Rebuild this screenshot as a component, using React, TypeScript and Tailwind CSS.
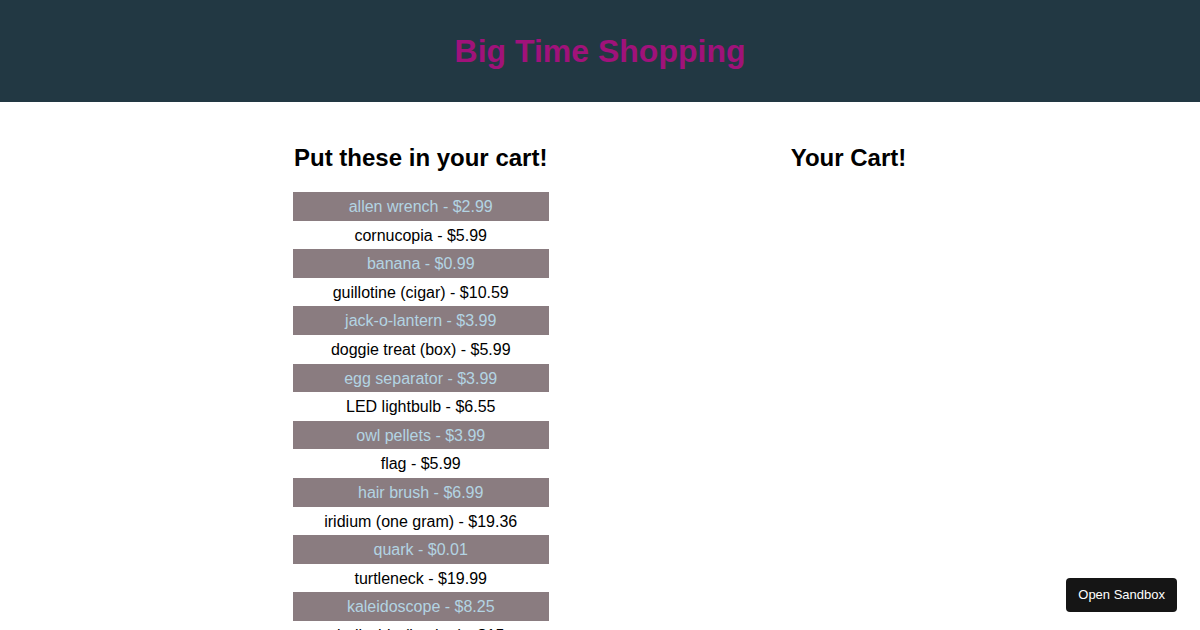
import React from 'react';

const items = [
  { name: 'allen wrench', price: '$2.99' },
  { name: 'cornucopia', price: '$5.99' },
  { name: 'banana', price: '$0.99' },
  { name: 'guillotine (cigar)', price: '$10.59' },
  { name: 'jack-o-lantern', price: '$3.99' },
  { name: 'doggie treat (box)', price: '$5.99' },
  { name: 'egg separator', price: '$3.99' },
  { name: 'LED lightbulb', price: '$6.55' },
  { name: 'owl pellets', price: '$3.99' },
  { name: 'flag', price: '$5.99' },
  { name: 'hair brush', price: '$6.99' },
  { name: 'iridium (one gram)', price: '$19.36' },
  { name: 'quark', price: '$0.01' },
  { name: 'turtleneck', price: '$19.99' },
  { name: 'kaleidoscope', price: '$8.25' },
  { name: 'bull whip (leather)', price: '$15' },
];

export default function App() {
  return (
    <div className="bg-white text-black font-['Liberation_Sans',Arial,sans-serif] relative overflow-hidden h-[630px]">
      <header className="h-[102px] bg-[#223843] flex items-center justify-center">
        <h1 className="text-[32px] font-bold text-[#a0127a] leading-[37px]">Big Time Shopping</h1>
      </header>

      <main className="flex justify-center gap-[242px] pt-[42px]">
        <section className="w-[256px] flex flex-col">
          <h2 className="text-[24px] font-bold leading-[28px] text-center whitespace-nowrap">Put these in your cart!</h2>
          <ul className="mt-[20px]">
            {items.map((item, i) => (
              <li
                key={item.name}
                className={
                  i % 2 === 0
                    ? 'bg-[#8a7c80] text-[#b3d4e3] text-center text-[16px] leading-[18.6px] pt-[6px] pb-[4px]'
                    : 'bg-white text-black text-center text-[16px] leading-[18.6px] pt-[6px] pb-[4px]'
                }
              >
                {item.name} - {item.price}
              </li>
            ))}
          </ul>
        </section>

        <section className="flex flex-col">
          <h2 className="text-[24px] font-bold leading-[28px] text-center whitespace-nowrap pr-[1px]">Your Cart!</h2>
        </section>
      </main>

      <button className="absolute right-[23px] bottom-[18px] bg-[#151515] text-white text-[13px] rounded-[4px] px-[12px] h-[34px] font-['Liberation_Sans',Arial,sans-serif]">
        Open Sandbox
      </button>
    </div>
  );
}
